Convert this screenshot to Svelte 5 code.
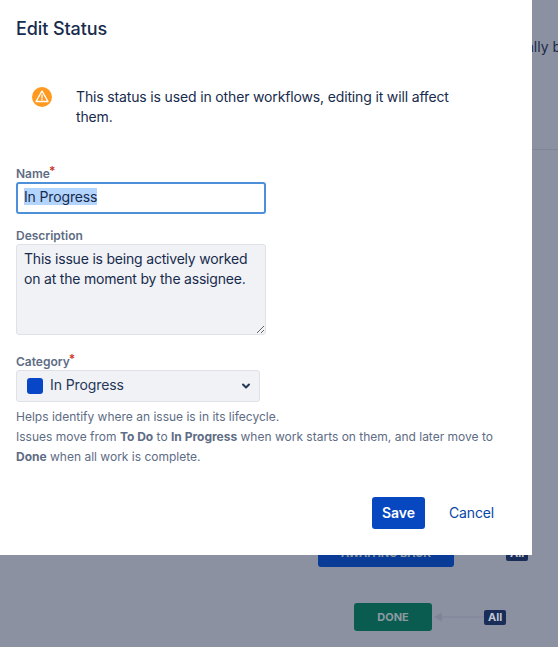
<script>
	let description = "This issue is being actively worked on at the moment by the assignee.";
</script>

<div class="page">
	<div class="backdrop">
		<span class="behind-text">ally be</span>
		<span class="behind-line"></span>
		<div class="node waiting">AWAITING BACK</div>
		<span class="all all-top">All</span>
		<div class="node done">DONE</div>
		<svg class="arrow" width="50" height="12" viewBox="0 0 50 12">
			<path d="M8 6H50" stroke="#7f8598" stroke-width="1" />
			<path d="M0 6L8 1.500V10.500Z" fill="#7f8598" />
		</svg>
		<span class="all all-done">All</span>
	</div>

	<div class="modal">
		<h2>Edit Status</h2>

		<div class="warning">
			<svg width="20" height="20" viewBox="0 0 20 20">
				<circle cx="10" cy="10" r="10" fill="#ff991f" />
				<path d="M10 4L16 14.500H4Z" fill="none" stroke="#fff" stroke-width="1.400" stroke-linejoin="round" />
				<path d="M10 8V11" stroke="#fff" stroke-width="1.300" stroke-linecap="round" />
				<circle cx="10" cy="12.700" r="0.800" fill="#fff" />
			</svg>
			<p>This status is used in other workflows, editing it will affect them.</p>
		</div>

		<label class="name-label" for="status-name">Name<span class="req">*</span></label>
		<div class="input" id="status-name"><span class="selected">In Progress</span></div>

		<label class="desc-label" for="status-desc">Description</label>
		<textarea id="status-desc" readonly value={description}></textarea>

		<label class="cat-label" for="status-cat">Category<span class="req">*</span></label>
		<div class="select" id="status-cat">
			<span class="swatch"></span>
			<span class="select-value">In Progress</span>
			<svg width="8" height="6" viewBox="0 0 8 6">
				<path d="M1 1.500L4 4.500L7 1.500" fill="none" stroke="#253858" stroke-width="2" stroke-linecap="round" stroke-linejoin="round" />
			</svg>
		</div>

		<div class="help">
			<p>Helps identify where an issue is in its lifecycle.</p>
			<p>Issues move from <b>To Do</b> to <b>In Progress</b> when work starts on them, and later move to <b>Done</b> when all work is complete.</p>
		</div>

		<div class="actions">
			<button class="save">Save</button>
			<button class="cancel">Cancel</button>
		</div>
	</div>
</div>

<style>
	:global(body) {
		margin: 0;
		font-family: Inter, "Liberation Sans", sans-serif;
		color: #172b4d;
	}

	.page {
		position: relative;
		width: 558px;
		height: 647px;
		overflow: hidden;
		background: #8b91a0;
	}

	/* page behind the dialog */
	.backdrop {
		position: absolute;
		inset: 0;
	}
	.behind-text {
		position: absolute;
		left: 526px;
		top: 37px;
		font-size: 14px;
		line-height: 20px;
		color: #1c2a4a;
		white-space: nowrap;
	}
	.behind-line {
		position: absolute;
		left: 532px;
		right: 0;
		top: 149px;
		height: 1px;
		background: #80869a;
	}
	.node {
		position: absolute;
		display: flex;
		align-items: center;
		justify-content: center;
		border-radius: 3px;
		font-size: 11px;
		font-weight: 700;
		color: #8b9aa0;
	}
	.waiting {
		left: 318px;
		top: 539px;
		width: 136px;
		height: 28px;
		background: #0a3c97;
	}
	.done {
		left: 354px;
		top: 603px;
		width: 78px;
		height: 28px;
		background: #0b5c50;
	}
	.arrow {
		position: absolute;
		left: 434px;
		top: 611px;
	}
	.all {
		position: absolute;
		padding: 0 4px;
		border-radius: 2px;
		background: #1a2d59;
		color: #c3c7d1;
		font-size: 11px;
		font-weight: 700;
		line-height: 15px;
	}
	.all-top {
		left: 506px;
		top: 546px;
	}
	.all-done {
		left: 484px;
		top: 610px;
	}

	.modal {
		position: relative;
		box-sizing: border-box;
		width: 532px;
		height: 555px;
		padding: 17px 16px 0;
		background: #fff;
	}
	h2 {
		margin: 0;
		font-size: 18px;
		font-weight: 500;
		line-height: 24px;
		letter-spacing: -0.1px;
	}
	.warning {
		display: flex;
		gap: 24px;
		margin: 46px 0 0 16px;
		width: 460px;
	}
	.warning svg {
		flex: none;
	}
	.warning p {
		margin: 0;
		font-size: 14px;
		line-height: 20px;
		letter-spacing: -0.15px;
		padding-right: 30px;
	}

	label {
		display: block;
		font-size: 12px;
		font-weight: 600;
		line-height: 16px;
		color: #5e6c84;
	}
	.req {
		color: #c9372c;
		position: relative;
		top: -3px;
		margin-left: -1px;
	}
	.name-label {
		margin-top: 39px;
	}
	.input {
		box-sizing: border-box;
		width: 250px;
		height: 32px;
		padding: 0 6px;
		border: 2px solid #4d90d9;
		border-radius: 3px;
		font-size: 14px;
		line-height: 26px;
		letter-spacing: -0.15px;
	}
	.selected {
		background: #b3d4fc;
	}
	.desc-label {
		margin-top: 14px;
	}
	textarea {
		display: block;
		box-sizing: border-box;
		width: 250px;
		height: 91px;
		margin: 0;
		padding: 4px 7px;
		border: 1px solid #dfe1e6;
		border-radius: 3px;
		background: #f1f2f6;
		color: #172b4d;
		font: inherit;
		font-size: 14px;
		line-height: 20px;
		letter-spacing: -0.2px;
		outline: none;
		resize: vertical;
	}
	.cat-label {
		margin-top: 19px;
	}
	.select {
		box-sizing: border-box;
		display: flex;
		align-items: center;
		width: 244px;
		height: 32px;
		padding: 0 9px 0 10px;
		border: 1px solid #dfe1e6;
		border-radius: 3px;
		background: #f1f2f6;
		font-size: 14px;
		letter-spacing: -0.1px;
		color: #253858;
	}
	.swatch {
		width: 16px;
		height: 16px;
		border-radius: 3px;
		background: #0747c7;
	}
	.select-value {
		flex: 1;
		margin-left: 7px;
		padding-bottom: 3px;
	}
	.help {
		margin-top: 5px;
		font-size: 12px;
		line-height: 20px;
		color: #5e6c84;
	}
	.help p {
		margin: 0;
	}
	.actions {
		display: flex;
		align-items: center;
		margin-top: 30px;
		padding-left: 356px;
	}
	button {
		border: none;
		font: inherit;
		font-size: 14px;
		border-radius: 3px;
		cursor: pointer;
	}
	.save {
		width: 53px;
		height: 32px;
		padding: 0 0 2px;
		background: #0747c0;
		color: #fff;
		font-weight: 600;
	}
	.cancel {
		margin-left: 12px;
		padding: 0 12px 2px;
		height: 32px;
		background: none;
		color: #0747a6;
		letter-spacing: -0.15px;
	}
</style>
